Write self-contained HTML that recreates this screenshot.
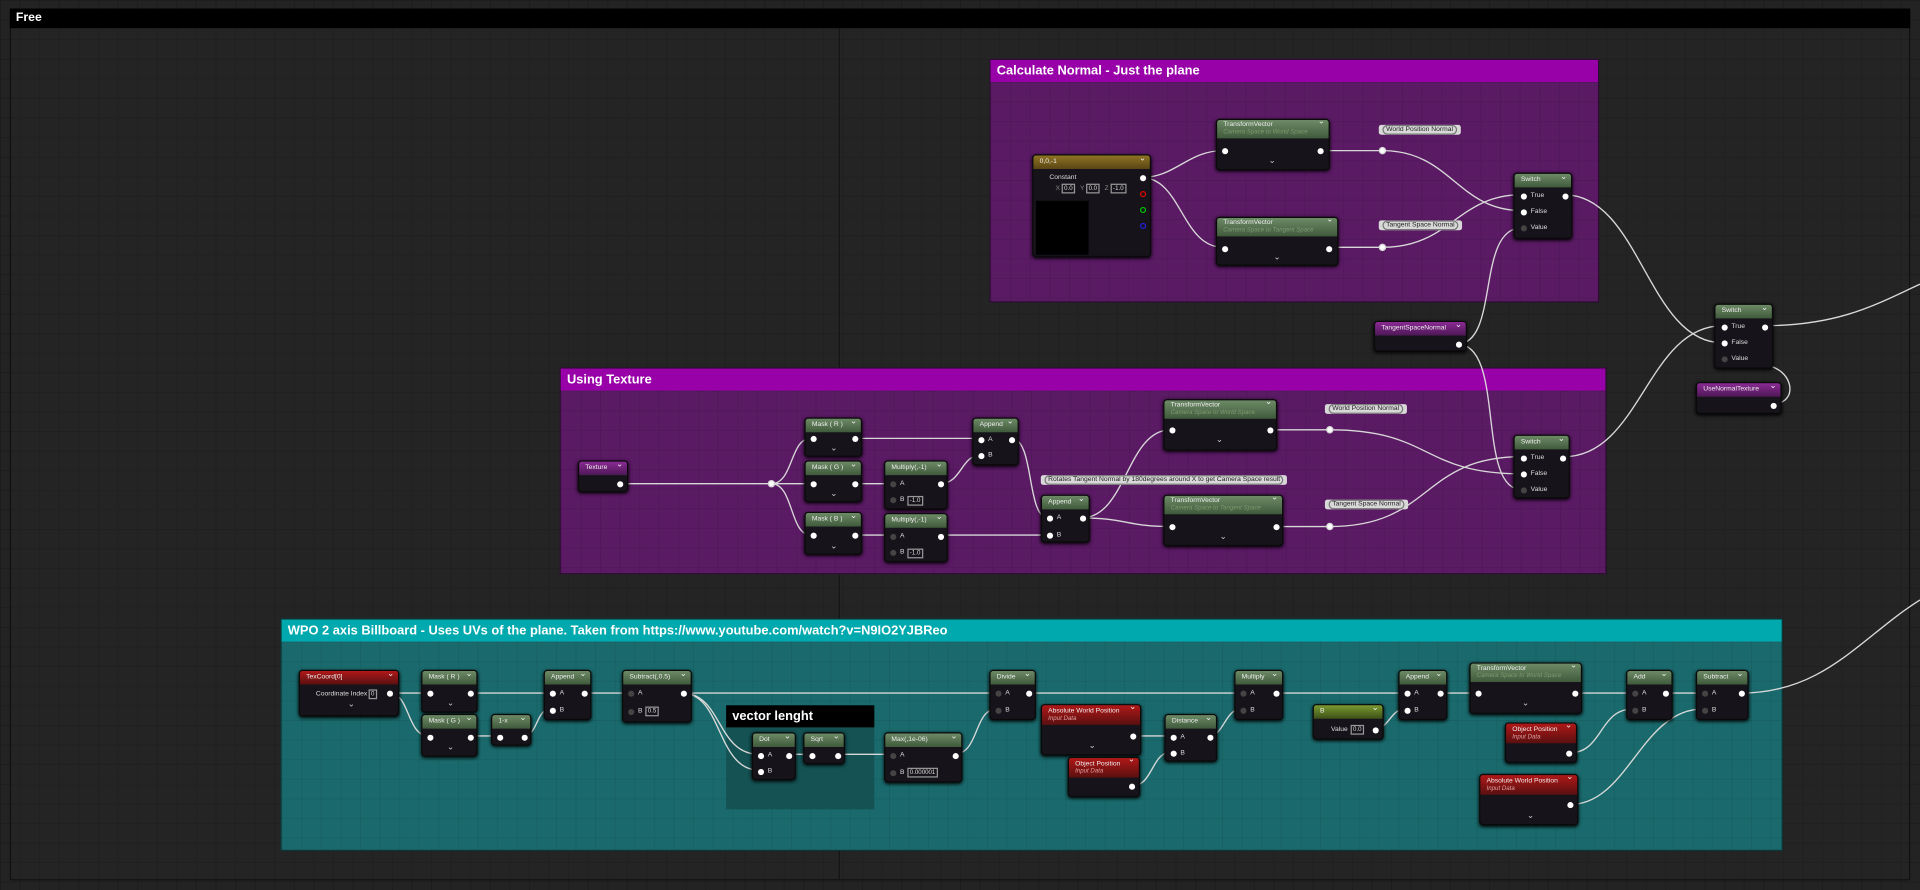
<!DOCTYPE html>
<html><head><meta charset="utf-8"><style>
*{margin:0;padding:0;box-sizing:border-box}
html,body{width:1920px;height:890px;overflow:hidden;background:#1c1c1c}
#s{position:absolute;left:0;top:0;width:1568px;height:727px;transform:scale(1.22449);transform-origin:0 0;font-family:"Liberation Sans",sans-serif;
background-color:#232323;background-image:linear-gradient(#1d1d1d 1px,transparent 1px),linear-gradient(90deg,#1d1d1d 1px,transparent 1px);background-size:16px 16px;overflow:hidden}
.free{position:absolute;left:8px;top:7px;width:1552px;height:712px;border:1px solid #111;background:rgba(40,40,40,.35)}
.freeh{position:absolute;left:8px;top:7px;width:1552px;height:16px;background:#000;color:#fff;font-weight:bold;font-size:10px;line-height:16px;padding-left:5px}
.c{position:absolute;border:1px solid rgba(0,0,0,.5)}
.c .ch{height:18px;color:#fff;font-weight:bold;font-size:10.5px;line-height:18px;padding-left:5px;white-space:nowrap;overflow:hidden}
.c .cb{position:absolute;left:0;right:0;top:18px;bottom:0;background-image:linear-gradient(rgba(0,0,0,.08) 1px,transparent 1px),linear-gradient(90deg,rgba(0,0,0,.08) 1px,transparent 1px);background-size:16px 16px}
.n{position:absolute;background:#16141a;border:1px solid #0a0a0a;border-radius:3px;box-shadow:0 1px 3px #000;font-size:5.5px;color:#ddd}
.h{height:11px;line-height:11px;padding-left:5px;color:#eee;border-radius:2px 2px 0 0;white-space:nowrap;overflow:hidden;font-size:5.5px;position:relative}
.h:after{content:"⌄";position:absolute;right:3px;top:-3px;font-size:7px}
.g{background:linear-gradient(#6d8a66,#3f5a3b)}
.pu{background:linear-gradient(#8a2a94,#4e1856)}
.rd{background:linear-gradient(#b01818,#5a1010)}
.go{background:linear-gradient(#8e7424,#5a4514)}
.sub{color:#7a9a70;font-style:italic;font-size:5px;line-height:6px;display:block;margin-top:-2px}
.rsub{color:#e0a0a0;font-style:italic;font-size:5px;line-height:6px;display:block;margin-top:-2px}
.p{position:absolute;width:5px;height:5px;border-radius:50%;background:#fff}
.pd{position:absolute;width:5px;height:5px;border-radius:50%;background:#444}
.t{position:absolute;font-size:5.5px;color:#ddd;white-space:nowrap}
.v{position:absolute;font-size:5px;color:#ddd;border:1px solid #999;padding:0 1px;line-height:6px}
.lb{position:absolute;background:#d8d8d8;border-radius:2px;font-size:5.5px;color:#222;padding:1px 3px;white-space:nowrap}
.lb span{border:1px solid #777;border-radius:5px;padding:0 2px}
.ar{position:absolute;font-size:7px;color:#ccc}
</style></head><body><div id="s">
<div class="free"></div>
<div class="freeh">Free</div>
<div style="position:absolute;left:685px;top:23px;width:1px;height:696px;background:#151515"></div>

<div class="c" style="left:808px;top:48px;width:498px;height:199px;background:#5a1a64"><div class="ch" style="background:#9800a8">Calculate Normal - Just the plane</div><div class="cb"></div></div>
<div class="c" style="left:457px;top:300px;width:855px;height:169px;background:#5a1a64"><div class="ch" style="background:#9800a8">Using Texture</div><div class="cb"></div></div>
<div class="c" style="left:229px;top:505px;width:1227px;height:190px;background:#1a6a6d"><div class="ch" style="background:#00a9ad">WPO 2 axis Billboard - Uses UVs of the plane. Taken from https://www.youtube.com/watch?v=N9IO2YJBReo</div><div class="cb"></div></div>
<div class="c" style="left:593px;top:576px;width:121px;height:85px;background:#145254;border:none"><div class="ch" style="background:#000;height:18px">vector lenght</div></div>

<svg width="1568" height="727" style="position:absolute;left:0;top:0" fill="none" stroke="#d8d8d8" stroke-width="1.1">
<path d="M932 145 C960 145,970 123,999 123"/>
<path d="M932 145 C965 145,965 202,999 202"/>
<path d="M1078 123 L1129 123 C1185 123,1190 172,1243 172"/>
<path d="M1086 202 L1129 202 C1185 202,1190 159,1243 159"/>
<path d="M1190 281 C1225 281,1205 186,1243 186"/>
<path d="M1190 281 C1230 281,1205 400,1243 400"/>
<path d="M1277 159 C1340 159,1345 280,1407 280"/>
<path d="M1277 373 C1340 373,1345 266,1407 266"/>
<path d="M1440 266 C1500 266,1530 250,1568 232"/>
<path d="M1447 330 C1470 330,1465 300,1440 298 C1420 296,1410 293,1407 293"/>
<path d="M1422 566 C1490 566,1520 520,1568 490"/>
<path d="M506 395 L630 395"/>
<path d="M630 395 C648 395,645 358,662 358"/>
<path d="M630 395 L662 395"/>
<path d="M630 395 C648 395,645 437,662 437"/>
<path d="M697 358 L800 358"/>
<path d="M697 395 L728 395"/>
<path d="M768 395 C785 395,785 372,800 372"/>
<path d="M697 437 L728 437"/>
<path d="M768 437 L856 437"/>
<path d="M826 358 C845 358,838 423,856 423"/>
<path d="M883 423 C920 423,920 351,956 351"/>
<path d="M883 423 C920 423,920 430,956 430"/>
<path d="M1036 351 L1086 351 C1170 351,1160 387,1243 387"/>
<path d="M1041 430 L1086 430 C1170 430,1160 373,1243 373"/>
<path d="M318 566 L350 566"/>
<path d="M318 566 C335 566,332 601,350 601"/>
<path d="M383 566 L450 566"/>
<path d="M383 601 L406 601"/>
<path d="M427 601 C440 601,437 579,450 579"/>
<path d="M476 566 L514 566"/>
<path d="M557 566 L814 566"/>
<path d="M557 566 C590 566,585 616,620 616"/>
<path d="M557 566 C590 566,585 629,620 629"/>
<path d="M643 616 L662 616"/>
<path d="M683 616 L728 616"/>
<path d="M779 616 C800 616,795 579,814 579"/>
<path d="M839 566 L1014 566"/>
<path d="M925 601 L957 601"/>
<path d="M924 642 C942 642,940 614,957 614"/>
<path d="M987 601 C1000 601,1000 579,1014 579"/>
<path d="M1041 566 L1148 566"/>
<path d="M1123 595 C1135 595,1135 579,1148 579"/>
<path d="M1175 566 L1206 566"/>
<path d="M1285 566 L1334 566"/>
<path d="M1359 566 L1391 566"/>
<path d="M1281 615 C1310 615,1305 579,1334 579"/>
<path d="M1282 657 C1330 657,1340 579,1391 579"/>
<circle cx="1129" cy="123" r="2.5" fill="#fff"/><circle cx="1129" cy="202" r="2.5" fill="#fff"/>
<circle cx="630" cy="395" r="2.5" fill="#fff"/><circle cx="1086" cy="351" r="2.5" fill="#fff"/><circle cx="1086" cy="430" r="2.5" fill="#fff"/>
</svg>

<!-- Calc normal nodes -->
<div class="n" style="left:843px;top:126px;width:97px;height:84px"><div class="h go" style="">0,0,-1</div>
<div class="t" style="left:13px;top:15px">Constant</div><div class="p" style="left:87px;top:16px"></div>
<div class="t" style="left:18px;top:24px;color:#888">X</div><div class="v" style="left:23px;top:23px">0.0</div><div class="t" style="left:38px;top:24px;color:#888">Y</div><div class="v" style="left:43px;top:23px">0.0</div><div class="t" style="left:58px;top:24px;color:#888">Z</div><div class="v" style="left:63px;top:23px">-1.0</div>
<div class="pd" style="left:87px;top:29px;border:1px solid #d00;background:none"></div><div class="pd" style="left:87px;top:42px;border:1px solid #0c0;background:none"></div><div class="pd" style="left:87px;top:55px;border:1px solid #22d;background:none"></div>
<div style="position:absolute;left:2px;top:37px;width:43px;height:44px;background:#000"></div></div>

<div class="n" style="left:993px;top:97px;width:93px;height:42px"><div class="h g" style="height:15px;line-height:9px">TransformVector<span class="sub">Camera Space to World Space</span></div><div class="p" style="left:4px;top:23px"></div><div class="p" style="left:82px;top:23px"></div><div class="ar" style="left:42px;top:29px">⌄</div></div>
<div class="n" style="left:993px;top:177px;width:100px;height:40px"><div class="h g" style="height:15px;line-height:9px">TransformVector<span class="sub">Camera Space to Tangent Space</span></div><div class="p" style="left:4px;top:23px"></div><div class="p" style="left:89px;top:23px"></div><div class="ar" style="left:46px;top:28px">⌄</div></div>
<div class="lb" style="left:1126px;top:102px"><span>World Position Normal</span></div>
<div class="lb" style="left:1126px;top:180px"><span>Tangent Space Normal</span></div>

<div class="n" style="left:1236px;top:141px;width:48px;height:54px"><div class="h g">Switch</div>
<div class="p" style="left:5px;top:16px"></div><div class="t" style="left:13px;top:15px">True</div><div class="p" style="left:39px;top:16px"></div>
<div class="p" style="left:5px;top:29px"></div><div class="t" style="left:13px;top:28px">False</div>
<div class="pd" style="left:5px;top:42px"></div><div class="t" style="left:13px;top:41px">Value</div></div>

<div class="n" style="left:1122px;top:262px;width:76px;height:25px"><div class="h pu">TangentSpaceNormal</div><div class="p" style="left:66px;top:16px"></div></div>
<div class="n" style="left:1400px;top:248px;width:48px;height:53px"><div class="h g">Switch</div>
<div class="p" style="left:5px;top:16px"></div><div class="t" style="left:13px;top:15px">True</div><div class="p" style="left:38px;top:16px"></div>
<div class="p" style="left:5px;top:29px"></div><div class="t" style="left:13px;top:28px">False</div>
<div class="pd" style="left:5px;top:42px"></div><div class="t" style="left:13px;top:41px">Value</div></div>
<div class="n" style="left:1385px;top:312px;width:70px;height:26px"><div class="h pu">UseNormalTexture</div><div class="p" style="left:60px;top:16px"></div></div>

<!-- Using texture nodes -->
<div class="n" style="left:472px;top:376px;width:41px;height:26px"><div class="h pu">Texture</div><div class="p" style="left:31px;top:16px"></div></div>
<div class="n" style="left:657px;top:341px;width:47px;height:32px"><div class="h g">Mask ( R )</div><div class="p" style="left:4px;top:14px"></div><div class="p" style="left:38px;top:14px"></div><div class="ar" style="left:20px;top:20px">⌄</div></div>
<div class="n" style="left:657px;top:376px;width:47px;height:34px"><div class="h g">Mask ( G )</div><div class="p" style="left:4px;top:16px"></div><div class="p" style="left:38px;top:16px"></div><div class="ar" style="left:20px;top:22px">⌄</div></div>
<div class="n" style="left:657px;top:418px;width:47px;height:35px"><div class="h g">Mask ( B )</div><div class="p" style="left:4px;top:16px"></div><div class="p" style="left:38px;top:16px"></div><div class="ar" style="left:20px;top:23px">⌄</div></div>
<div class="n" style="left:722px;top:376px;width:52px;height:40px"><div class="h g">Multiply(,-1)</div><div class="pd" style="left:4px;top:16px"></div><div class="t" style="left:12px;top:15px">A</div><div class="p" style="left:43px;top:16px"></div><div class="pd" style="left:4px;top:29px"></div><div class="t" style="left:12px;top:28px">B</div><div class="v" style="left:18px;top:28px">-1.0</div></div>
<div class="n" style="left:722px;top:419px;width:52px;height:40px"><div class="h g">Multiply(,-1)</div><div class="pd" style="left:4px;top:16px"></div><div class="t" style="left:12px;top:15px">A</div><div class="p" style="left:43px;top:16px"></div><div class="pd" style="left:4px;top:29px"></div><div class="t" style="left:12px;top:28px">B</div><div class="v" style="left:18px;top:28px">-1.0</div></div>
<div class="n" style="left:794px;top:341px;width:38px;height:39px"><div class="h g">Append</div><div class="p" style="left:4px;top:15px"></div><div class="t" style="left:12px;top:14px">A</div><div class="p" style="left:29px;top:15px"></div><div class="p" style="left:4px;top:28px"></div><div class="t" style="left:12px;top:27px">B</div></div>
<div class="n" style="left:850px;top:404px;width:40px;height:39px"><div class="h g">Append</div><div class="p" style="left:4px;top:16px"></div><div class="t" style="left:12px;top:15px">A</div><div class="p" style="left:31px;top:16px"></div><div class="p" style="left:4px;top:30px"></div><div class="t" style="left:12px;top:29px">B</div></div>
<div class="n" style="left:950px;top:326px;width:93px;height:42px"><div class="h g" style="height:15px;line-height:9px">TransformVector<span class="sub">Camera Space to World Space</span></div><div class="p" style="left:4px;top:22px"></div><div class="p" style="left:84px;top:22px"></div><div class="ar" style="left:42px;top:28px">⌄</div></div>
<div class="n" style="left:950px;top:404px;width:98px;height:42px"><div class="h g" style="height:15px;line-height:9px">TransformVector<span class="sub">Camera Space to Tangent Space</span></div><div class="p" style="left:4px;top:23px"></div><div class="p" style="left:89px;top:23px"></div><div class="ar" style="left:45px;top:29px">⌄</div></div>
<div class="lb" style="left:1082px;top:330px"><span>World Position Normal</span></div>
<div class="lb" style="left:850px;top:388px"><span>Rotates Tangent Normal by 180degrees around X  to get Camera Space result</span></div>
<div class="lb" style="left:1082px;top:408px"><span>Tangent Space Normal</span></div>
<div class="n" style="left:1236px;top:355px;width:46px;height:52px"><div class="h g">Switch</div>
<div class="p" style="left:5px;top:16px"></div><div class="t" style="left:13px;top:15px">True</div><div class="p" style="left:37px;top:16px"></div>
<div class="p" style="left:5px;top:29px"></div><div class="t" style="left:13px;top:28px">False</div>
<div class="pd" style="left:5px;top:42px"></div><div class="t" style="left:13px;top:41px">Value</div></div>

<!-- WPO nodes -->
<div class="n" style="left:244px;top:547px;width:82px;height:38px"><div class="h rd">TexCoord[0]</div><div class="t" style="left:13px;top:16px">Coordinate Index</div><div class="v" style="left:56px;top:15px">0</div><div class="p" style="left:71px;top:16px"></div><div class="ar" style="left:39px;top:23px">⌄</div></div>
<div class="n" style="left:344px;top:547px;width:46px;height:35px"><div class="h g">Mask ( R )</div><div class="p" style="left:4px;top:16px"></div><div class="p" style="left:37px;top:16px"></div><div class="ar" style="left:20px;top:22px">⌄</div></div>
<div class="n" style="left:344px;top:583px;width:46px;height:35px"><div class="h g">Mask ( G )</div><div class="p" style="left:4px;top:16px"></div><div class="p" style="left:37px;top:16px"></div><div class="ar" style="left:20px;top:22px">⌄</div></div>
<div class="n" style="left:401px;top:583px;width:33px;height:26px"><div class="h g">1-x</div><div class="p" style="left:4px;top:16px"></div><div class="p" style="left:24px;top:16px"></div></div>
<div class="n" style="left:444px;top:547px;width:39px;height:41px"><div class="h g">Append</div><div class="p" style="left:4px;top:16px"></div><div class="t" style="left:12px;top:15px">A</div><div class="p" style="left:30px;top:16px"></div><div class="p" style="left:4px;top:30px"></div><div class="t" style="left:12px;top:29px">B</div></div>
<div class="n" style="left:508px;top:547px;width:57px;height:43px"><div class="h g">Subtract(,0.5)</div><div class="pd" style="left:4px;top:16px"></div><div class="t" style="left:12px;top:15px">A</div><div class="p" style="left:47px;top:16px"></div><div class="pd" style="left:4px;top:31px"></div><div class="t" style="left:12px;top:30px">B</div><div class="v" style="left:18px;top:29px">0.5</div></div>
<div class="n" style="left:614px;top:598px;width:36px;height:39px"><div class="h g">Dot</div><div class="p" style="left:4px;top:16px"></div><div class="t" style="left:12px;top:15px">A</div><div class="p" style="left:27px;top:16px"></div><div class="p" style="left:4px;top:29px"></div><div class="t" style="left:12px;top:28px">B</div></div>
<div class="n" style="left:656px;top:598px;width:34px;height:26px"><div class="h g">Sqrt</div><div class="p" style="left:4px;top:16px"></div><div class="p" style="left:25px;top:16px"></div></div>
<div class="n" style="left:722px;top:598px;width:64px;height:41px"><div class="h g">Max(,1e-06)</div><div class="pd" style="left:4px;top:16px"></div><div class="t" style="left:12px;top:15px">A</div><div class="p" style="left:55px;top:16px"></div><div class="pd" style="left:4px;top:30px"></div><div class="t" style="left:12px;top:29px">B</div><div class="v" style="left:18px;top:28px">0.000001</div></div>
<div class="n" style="left:808px;top:547px;width:38px;height:41px"><div class="h g">Divide</div><div class="pd" style="left:4px;top:16px"></div><div class="t" style="left:12px;top:15px">A</div><div class="p" style="left:29px;top:16px"></div><div class="pd" style="left:4px;top:30px"></div><div class="t" style="left:12px;top:29px">B</div></div>
<div class="n" style="left:850px;top:575px;width:82px;height:42px"><div class="h rd" style="height:16px;line-height:10px">Absolute World Position<span class="rsub">Input Data</span></div><div class="p" style="left:72px;top:23px"></div><div class="ar" style="left:38px;top:29px">⌄</div></div>
<div class="n" style="left:872px;top:618px;width:59px;height:33px"><div class="h rd" style="height:16px;line-height:10px">Object Position<span class="rsub">Input Data</span></div><div class="p" style="left:49px;top:21px"></div></div>
<div class="n" style="left:951px;top:583px;width:43px;height:39px"><div class="h g">Distance</div><div class="p" style="left:4px;top:16px"></div><div class="t" style="left:12px;top:15px">A</div><div class="p" style="left:34px;top:16px"></div><div class="p" style="left:4px;top:29px"></div><div class="t" style="left:12px;top:28px">B</div></div>
<div class="n" style="left:1008px;top:547px;width:40px;height:41px"><div class="h g">Multiply</div><div class="pd" style="left:4px;top:16px"></div><div class="t" style="left:12px;top:15px">A</div><div class="p" style="left:31px;top:16px"></div><div class="pd" style="left:4px;top:30px"></div><div class="t" style="left:12px;top:29px">B</div></div>
<div class="n" style="left:1072px;top:575px;width:58px;height:29px"><div class="h" style="background:linear-gradient(#7a9a30,#3d5018)">B</div><div class="t" style="left:14px;top:17px">Value</div><div class="v" style="left:30px;top:16px">0.0</div><div class="p" style="left:48px;top:18px"></div></div>
<div class="n" style="left:1142px;top:547px;width:40px;height:41px"><div class="h g">Append</div><div class="p" style="left:4px;top:16px"></div><div class="t" style="left:12px;top:15px">A</div><div class="p" style="left:31px;top:16px"></div><div class="p" style="left:4px;top:30px"></div><div class="t" style="left:12px;top:29px">B</div></div>
<div class="n" style="left:1200px;top:541px;width:92px;height:42px"><div class="h g" style="height:15px;line-height:9px">TransformVector<span class="sub">Camera Space to World Space</span></div><div class="p" style="left:4px;top:22px"></div><div class="p" style="left:83px;top:22px"></div><div class="ar" style="left:42px;top:28px">⌄</div></div>
<div class="n" style="left:1229px;top:590px;width:59px;height:33px"><div class="h rd" style="height:16px;line-height:10px">Object Position<span class="rsub">Input Data</span></div><div class="p" style="left:49px;top:22px"></div></div>
<div class="n" style="left:1208px;top:632px;width:81px;height:42px"><div class="h rd" style="height:16px;line-height:10px">Absolute World Position<span class="rsub">Input Data</span></div><div class="p" style="left:71px;top:22px"></div><div class="ar" style="left:38px;top:29px">⌄</div></div>
<div class="n" style="left:1328px;top:547px;width:38px;height:41px"><div class="h g">Add</div><div class="pd" style="left:4px;top:16px"></div><div class="t" style="left:12px;top:15px">A</div><div class="p" style="left:29px;top:16px"></div><div class="pd" style="left:4px;top:30px"></div><div class="t" style="left:12px;top:29px">B</div></div>
<div class="n" style="left:1385px;top:547px;width:43px;height:41px"><div class="h g">Subtract</div><div class="pd" style="left:4px;top:16px"></div><div class="t" style="left:12px;top:15px">A</div><div class="p" style="left:34px;top:16px"></div><div class="pd" style="left:4px;top:30px"></div><div class="t" style="left:12px;top:29px">B</div></div>
</div></body></html>
